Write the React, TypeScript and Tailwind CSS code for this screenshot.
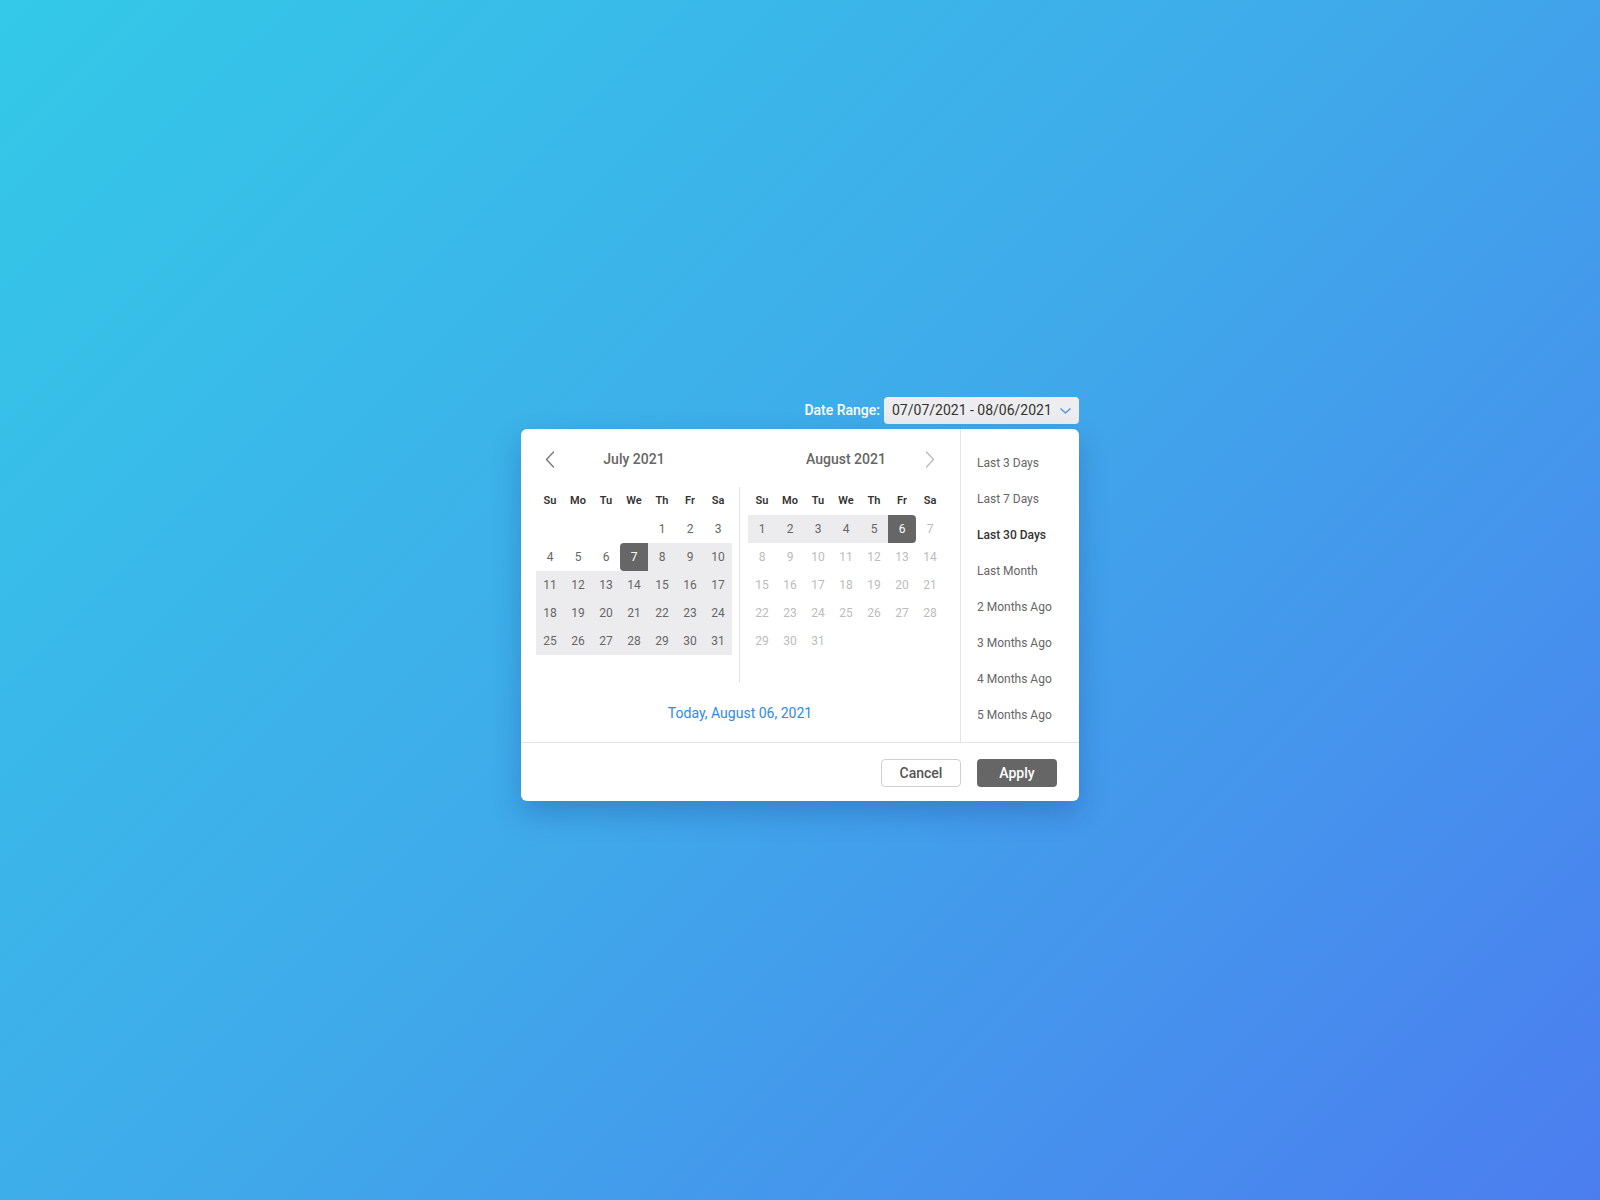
import React from "react";

const DOW = ["Su", "Mo", "Tu", "We", "Th", "Fr", "Sa"];

type CellInfo = { bg: string; text: string };

function Chevron({ dir, color }: { dir: "left" | "right"; color: string }) {
  return (
    <svg width="10" height="17" viewBox="0 0 10 17" fill="none">
      {dir === "left" ? (
        <path d="M8.5 1 L1.5 8.5 L8.5 16" stroke={color} strokeWidth="1.4" strokeLinecap="round" strokeLinejoin="round" />
      ) : (
        <path d="M1.5 1 L8.5 8.5 L1.5 16" stroke={color} strokeWidth="1.4" strokeLinecap="round" strokeLinejoin="round" />
      )}
    </svg>
  );
}

function Month({
  title,
  offset,
  days,
  arrow,
  cell,
}: {
  title: string;
  offset: number;
  days: number;
  arrow: "left" | "right";
  cell: (d: number) => CellInfo;
}) {
  const cells: (number | null)[] = [];
  for (let i = 0; i < 42; i++) {
    const d = i - offset + 1;
    cells.push(d >= 1 && d <= days ? d : null);
  }
  return (
    <div className="flex w-[196px] flex-col">
      <div className="relative flex h-[28px] items-center justify-center">
        {arrow === "left" ? (
          <div className="absolute left-0 top-0 flex h-[28px] w-[28px] items-center justify-center">
            <Chevron dir="left" color="#7a7a7a" />
          </div>
        ) : (
          <div className="absolute right-0 top-0 flex h-[28px] w-[28px] items-center justify-center">
            <Chevron dir="right" color="#bdbdbd" />
          </div>
        )}
        <span className="text-[14px] font-medium text-[#666666]">{title}</span>
      </div>
      <div className="mt-[14px] grid grid-cols-7">
        {DOW.map((d) => (
          <div key={d} className="flex h-[28px] items-center justify-center text-[11px] font-semibold text-[#333333]">
            {d}
          </div>
        ))}
        {cells.map((d, i) => {
          if (d === null) return <div key={i} className="h-[28px]" />;
          const c = cell(d);
          return (
            <div key={i} className={`flex h-[28px] items-center justify-center text-[12px] ${c.bg} ${c.text}`}>
              {d}
            </div>
          );
        })}
      </div>
    </div>
  );
}

const julyCell = (d: number): CellInfo => {
  if (d === 7) return { bg: "bg-[#666666] rounded-l-[4px]", text: "text-white" };
  if (d > 7) return { bg: "bg-[#ececee]", text: "text-[#666666]" };
  return { bg: "", text: "text-[#666666]" };
};

const augCell = (d: number): CellInfo => {
  if (d === 6) return { bg: "bg-[#666666] rounded-r-[4px]", text: "text-white" };
  if (d < 6) return { bg: "bg-[#ececee]", text: "text-[#666666]" };
  return { bg: "", text: "text-[#bcbcbc]" };
};

const PRESETS = [
  "Last 3 Days",
  "Last 7 Days",
  "Last 30 Days",
  "Last Month",
  "2 Months Ago",
  "3 Months Ago",
  "4 Months Ago",
  "5 Months Ago",
];

export default function App() {
  return (
    <div
      className="flex min-h-screen w-full items-center justify-center bg-[linear-gradient(135deg,#33c9e7_0%,#3fa9ea_50%,#4b7def_100%)]"
      style={{ fontFamily: "Roboto, 'Noto Sans', 'Liberation Sans', sans-serif" }}
    >
      <div className="mb-[2px] flex w-[558px] flex-col items-end">
        <div className="flex items-center gap-[4px]">
          <span className="text-[14px] font-medium text-white">Date Range:</span>
          <div className="flex h-[27px] w-[195px] items-center justify-between rounded-[4px] bg-[#ededf0] pl-[8px] pr-[8px]">
            <span className="text-[14px] text-[#333333]">07/07/2021 - 08/06/2021</span>
            <svg width="11" height="6" viewBox="0 0 11 6" fill="none">
              <path d="M0.8 0.8 L5.5 5 L10.2 0.8" stroke="#4a8ee6" strokeWidth="1.2" strokeLinecap="round" strokeLinejoin="round" />
            </svg>
          </div>
        </div>
        <div className="mt-[5px] w-[558px] overflow-hidden rounded-[6px] bg-white shadow-[0_12px_28px_rgba(20,50,130,0.28)]">
          <div className="flex">
            <div className="flex w-[439px] flex-col pl-[15px] pr-[16px] pt-[16px] pb-[19px]">
              <div className="flex items-start">
                <Month title="July 2021" offset={4} days={31} arrow="left" cell={julyCell} />
                <div className="ml-[7px] mr-[8px] mt-[42px] h-[196px] w-px bg-[#e3e3e3]" />
                <Month title="August 2021" offset={0} days={31} arrow="right" cell={augCell} />
              </div>
              <div className="mt-[20px] flex h-[20px] items-center justify-center text-[14px] text-[#2e8ae8]">
                Today, August 06, 2021
              </div>
            </div>
            <div className="flex w-[119px] flex-col border-l border-[#e3e3e3] pl-[16px] pt-[16px]">
              {PRESETS.map((p) => (
                <div
                  key={p}
                  className={`flex h-[36px] items-center text-[12px] ${
                    p === "Last 30 Days" ? "font-medium text-[#333333]" : "text-[#666666]"
                  }`}
                >
                  {p}
                </div>
              ))}
            </div>
          </div>
          <div className="flex justify-end gap-[16px] border-t border-[#e3e3e3] pb-[14px] pr-[22px] pt-[16px]">
            <button className="flex h-[28px] w-[80px] items-center justify-center rounded-[4px] border border-[#cfcfd4] bg-white text-[14px] font-medium text-[#555555]">
              Cancel
            </button>
            <button className="flex h-[28px] w-[80px] items-center justify-center rounded-[4px] bg-[#666666] text-[14px] font-medium text-white">
              Apply
            </button>
          </div>
        </div>
      </div>
    </div>
  );
}
